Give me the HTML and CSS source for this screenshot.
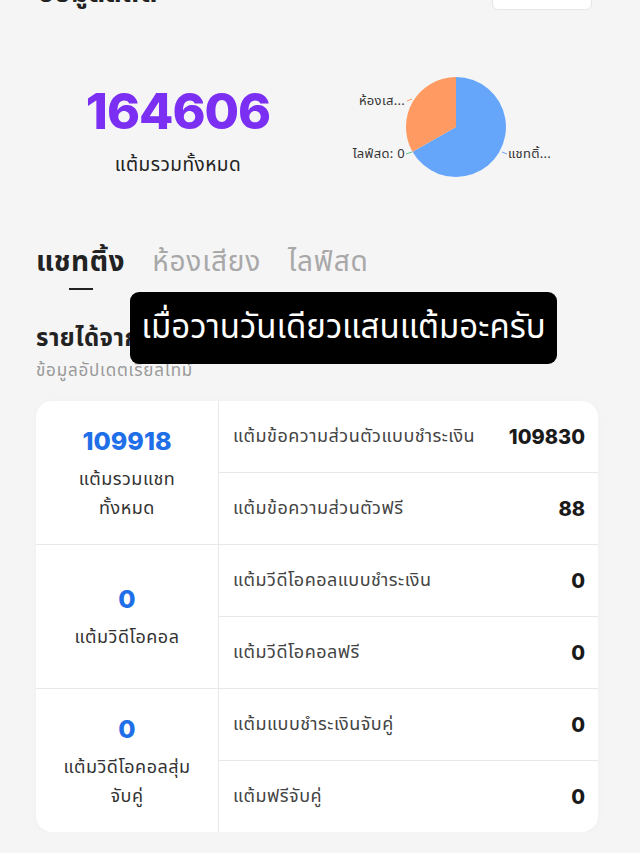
FILE: index.html
```html
<!DOCTYPE html>
<html lang="th">
<head>
  <meta charset="UTF-8">
  <meta name="viewport" content="width=device-width, initial-scale=1.0">
  <title>ข้อมูลสถิติ</title>
  <link rel="stylesheet" href="styles.css">
</head>
<body>
  <div class="page">
    <div class="header">
      <h2 class="title">ข้อมูลสถิติ</h2>
      <button class="range-btn">7 วัน</button>
    </div>

    <div class="summary">
      <div class="total">
        <div class="total-num">164606</div>
        <div class="total-label">แต้มรวมทั้งหมด</div>
      </div>
      <div class="pie">
        <svg width="240" height="130" viewBox="0 0 240 130">
          <path d="M116,66 L116,16 A50,50 0 1 1 72.5,90.7 Z" fill="#66a6fa"/>
          <path d="M116,66 L72.5,90.7 A50,50 0 0 1 116,16 Z" fill="#fe9a62"/>
          <line x1="67" y1="40" x2="72" y2="38" stroke="#fe9a62"/>
          <line x1="66" y1="93" x2="72" y2="91" stroke="#5cc489"/>
          <line x1="162" y1="91" x2="167" y2="93" stroke="#66a6fa"/>
          <text x="65" y="44" text-anchor="end" class="pie-txt">ห้องเส...</text>
          <text x="65" y="97" text-anchor="end" class="pie-txt">ไลฟ์สด: 0</text>
          <text x="168" y="97" class="pie-txt">แชทติ้...</text>
        </svg>
      </div>
    </div>

    <div class="tabs">
      <div class="tab active">แชทติ้ง</div>
      <div class="tab">ห้องเสียง</div>
      <div class="tab">ไลฟ์สด</div>
    </div>

    <div class="income">
      <h3 class="income-title">รายได้จากแชท</h3>
      <div class="income-sub">ข้อมูลอัปเดตเรียลไทม์</div>
      <div class="caption">เมื่อวานวันเดียวแสนแต้มอะครับ</div>
    </div>

    <div class="card">
      <div class="group">
        <div class="group-sum">
          <div class="sum-num">109918</div>
          <div class="sum-label">แต้มรวมแชท<br>ทั้งหมด</div>
        </div>
        <div class="rows">
          <div class="row"><span>แต้มข้อความส่วนตัวแบบชำระเงิน</span><b>109830</b></div>
          <div class="row"><span>แต้มข้อความส่วนตัวฟรี</span><b>88</b></div>
        </div>
      </div>
      <div class="group">
        <div class="group-sum">
          <div class="sum-num">0</div>
          <div class="sum-label">แต้มวิดีโอคอล</div>
        </div>
        <div class="rows">
          <div class="row"><span>แต้มวีดีโอคอลแบบชำระเงิน</span><b>0</b></div>
          <div class="row"><span>แต้มวีดีโอคอลฟรี</span><b>0</b></div>
        </div>
      </div>
      <div class="group">
        <div class="group-sum">
          <div class="sum-num">0</div>
          <div class="sum-label">แต้มวิดีโอคอลสุ่ม<br>จับคู่</div>
        </div>
        <div class="rows">
          <div class="row"><span>แต้มแบบชำระเงินจับคู่</span><b>0</b></div>
          <div class="row"><span>แต้มฟรีจับคู่</span><b>0</b></div>
        </div>
      </div>
    </div>
  </div>
</body>
</html>
```

FILE: styles.css
```css
body {
  margin: 0;
  background-color: #f5f5f5;
  font-family: 'Noto Sans Thai', 'Noto Sans', sans-serif;
  color: #222;
}
.page {
  padding: 0 36px;
  overflow: hidden;
}
.header {
  display: flex;
  justify-content: space-between;
  align-items: flex-end;
  margin-top: -23px;
}
.title {
  margin: 0 0 0 2px;
  font-size: 27px;
  line-height: 32px;
  font-weight: 700;
  letter-spacing: 0.5px;
}
.range-btn {
  width: 100px;
  height: 33px;
  margin: 0 12px 0 0;
  background: #fff;
  border: 1px solid #e6e6e6;
  border-radius: 6px;
  font-family: inherit;
}
.summary {
  display: flex;
  margin-top: 51px;
  height: 130px;
}
.total {
  flex: 1;
  text-align: center;
  padding-top: 22px;
}
.total-num {
  font-family: 'Inter', sans-serif;
  font-weight: 800;
  font-size: 50px;
  line-height: 56px;
  color: #7b2ff2;
  letter-spacing: -1px;
}
.total-label {
  font-size: 19px;
  letter-spacing: 0.5px;
  margin-top: 12px;
  color: #222;
}
.pie {
  flex: 1;
  display: flex;
  justify-content: center;
}
.pie svg {
  margin-left: -4px;
}
.pie-txt {
  font-size: 13px;
  letter-spacing: 0.3px;
  fill: #333;
}
.tabs {
  display: flex;
  gap: 27px;
  margin-top: 52px;
}
.tab {
  font-size: 28px;
  letter-spacing: 0.8px;
  line-height: 40px;
  color: #a8a8a8;
  position: relative;
}
.tab.active {
  color: #222;
  font-weight: 700;
  letter-spacing: 0.6px;
}
.tab.active::after {
  content: '';
  position: absolute;
  left: 33px;
  top: 45px;
  width: 24px;
  height: 2px;
  background: #222;
}
.income {
  position: relative;
  margin-top: 39px;
}
.income-title {
  margin: 0;
  font-size: 24px;
  letter-spacing: 0.5px;
  line-height: 34px;
  font-weight: 700;
}
.income-sub {
  font-size: 17px;
  letter-spacing: 0.8px;
  color: #999;
  margin-top: 2px;
}
.caption {
  position: absolute;
  left: 94px;
  top: -30px;
  width: 427px;
  height: 72px;
  box-sizing: border-box;
  background: #000;
  color: #fff;
  border-radius: 9px;
  font-size: 33px;
  line-height: 72px;
  text-align: center;
}
.card {
  margin-top: 17px;
  margin-right: 6px;
  background: #fff;
  border-radius: 16px;
  box-shadow: 0 1px 6px rgba(0,0,0,0.03);
  overflow: hidden;
}
.group {
  display: flex;
  border-top: 1px solid #e8e8e8;
}
.group:first-child {
  border-top: none;
}
.group-sum {
  width: 182px;
  border-right: 1px solid #e8e8e8;
  display: flex;
  flex-direction: column;
  justify-content: center;
  align-items: center;
  text-align: center;
}
.sum-num {
  font-family: 'Inter', sans-serif;
  font-weight: 800;
  font-size: 25px;
  color: #1f6fe8;
  line-height: 36px;
}
.sum-label {
  font-size: 18px;
  letter-spacing: 0.5px;
  line-height: 29px;
  margin-top: 6px;
  color: #333;
}
.rows {
  flex: 1;
}
.row {
  height: 71px;
  display: flex;
  justify-content: space-between;
  align-items: center;
  padding: 0 13px 0 14px;
  font-size: 18px;
  letter-spacing: 0.5px;
  color: #444;
}
.row + .row {
  border-top: 1px solid #e8e8e8;
}
.row b {
  font-family: 'Inter', sans-serif;
  font-weight: 800;
  font-size: 20px;
  letter-spacing: 0;
  color: #1a1a1a;
}
```
